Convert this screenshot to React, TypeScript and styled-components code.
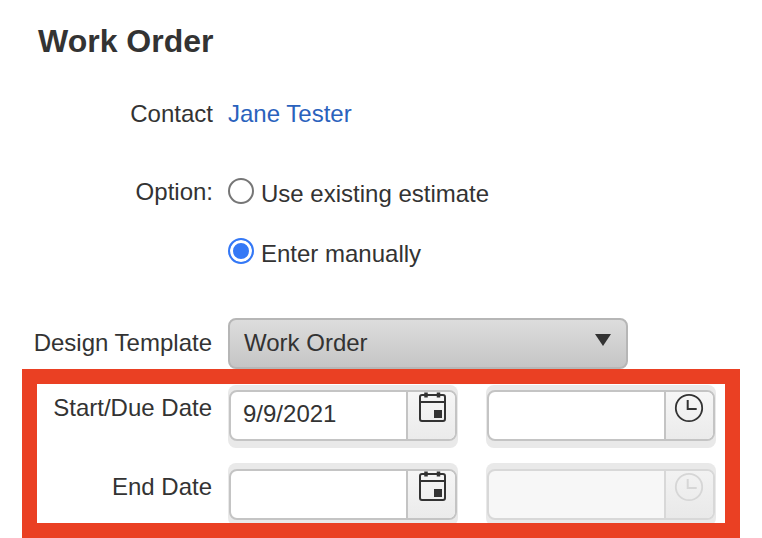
import styled, { createGlobalStyle } from 'styled-components'

const GlobalStyle = createGlobalStyle`
  html, body {
    margin: 0;
    padding: 0;
    background: #fff;
  }
  body {
    width: 762px;
    height: 538px;
    overflow: hidden;
    font-family: "Liberation Sans", Arial, sans-serif;
    color: #333;
  }
`

function CalendarIcon() {
  return (
    <svg width="30" height="32" viewBox="0 0 30 32" fill="none">
      <rect x="2" y="3" width="25" height="26" rx="2" stroke="#333" strokeWidth="2" />
      <path d="M2 10H27" stroke="#333" strokeWidth="2" />
      <path d="M8 0.5V5.5M20.5 0.5V5.5" stroke="#333" strokeWidth="3.5" />
      <rect x="16" y="18" width="8" height="8" fill="#333" />
    </svg>
  )
}

function ClockIcon({ disabled }: { disabled?: boolean }) {
  const color = disabled ? '#d6d6d6' : '#333'
  return (
    <ClockSvg width="30" height="32" viewBox="0 0 30 32" fill="none">
      <circle cx="15" cy="16" r="13.2" stroke={color} strokeWidth="1.8" />
      <path d="M13.7 8V17H22.7" stroke={color} strokeWidth="2" />
    </ClockSvg>
  )
}

function App() {
  return (
    <Page>
      <GlobalStyle />
      <Title>Work Order</Title>
      <ContactRow>
        <Label>Contact</Label>
        <ContactLink>Jane Tester</ContactLink>
      </ContactRow>
      <OptionRow>
        <Label>Option:</Label>
        <RadioList>
          <RadioItem>
            <Radio />
            Use existing estimate
          </RadioItem>
          <RadioItem>
            <Radio $checked />
            Enter manually
          </RadioItem>
        </RadioList>
      </OptionRow>
      <TemplateRow>
        <TemplateLabel>Design Template</TemplateLabel>
        <Select>
          Work Order
          <Arrow />
        </Select>
      </TemplateRow>
      <Highlight>
        <DateRow>
          <DateLabel>Start/Due Date</DateLabel>
          <Widgets>
            <Widget>
              <Field>
                <FieldText>9/9/2021</FieldText>
                <Addon><CalendarIcon /></Addon>
              </Field>
            </Widget>
            <Widget>
              <Field>
                <FieldText />
                <Addon><ClockIcon /></Addon>
              </Field>
            </Widget>
          </Widgets>
        </DateRow>
        <DateRow>
          <DateLabel>End Date</DateLabel>
          <Widgets>
            <Widget>
              <Field>
                <FieldText />
                <Addon><CalendarIcon /></Addon>
              </Field>
            </Widget>
            <Widget>
              <Field $disabled>
                <FieldText />
                <Addon $disabled><ClockIcon disabled /></Addon>
              </Field>
            </Widget>
          </Widgets>
        </DateRow>
      </Highlight>
    </Page>
  )
}

const Page = styled.div`
  width: 762px;
  height: 538px;
  padding: 0 0 0 22px;
  box-sizing: border-box;
  font-size: 24px;
`
const Title = styled.h1`
  margin: 0;
  padding: 23px 0 0 16px;
  font-size: 32px;
  line-height: 37px;
  font-weight: 700;
  color: #333;
`
const Row = styled.div`
  display: flex;
  column-gap: 15px;
`
const ContactRow = styled(Row)`
  margin-top: 40px;
  line-height: 28px;
`
const OptionRow = styled(Row)`
  margin-top: 50px;
`
const TemplateRow = styled(Row)`
  margin-top: 52px;
  align-items: center;
`
const Label = styled.div`
  width: 191px;
  text-align: right;
  line-height: 28px;
  flex: none;
`
const TemplateLabel = styled(Label)`
  width: 190px;
  margin-right: 1px;
  margin-bottom: 2px;
`
const ContactLink = styled.a`
  color: #2a62bd;
`
const RadioList = styled.div`
  display: flex;
  flex-direction: column;
  row-gap: 32px;
`
const RadioItem = styled.div`
  display: flex;
  align-items: flex-start;
  column-gap: 7px;
  height: 28px;
  line-height: 32px;
`
const Radio = styled.span<{ $checked?: boolean }>`
  display: block;
  flex: none;
  width: 26px;
  height: 26px;
  box-sizing: border-box;
  border-radius: 50%;
  border: ${p => (p.$checked ? '2px solid #3478f6' : '2px solid #767676')};
  background: ${p => (p.$checked ? '#3478f6' : '#fff')};
  box-shadow: ${p => (p.$checked ? 'inset 0 0 0 3px #fff' : 'none')};
`
const Select = styled.div`
  position: relative;
  width: 400px;
  height: 51px;
  box-sizing: border-box;
  padding-left: 14px;
  line-height: 45px;
  border: 2px solid #b6b6b6;
  border-radius: 8px;
  background: linear-gradient(#dddddd, #c5c5c5);
`
const Arrow = styled.span`
  position: absolute;
  top: 14px;
  right: 15px;
  width: 0;
  height: 0;
  border-left: 8.5px solid transparent;
  border-right: 8.5px solid transparent;
  border-top: 12px solid #333;
`
const Highlight = styled.section`
  width: 718px;
  height: 169px;
  box-sizing: border-box;
  border: 15px solid #ea4023;
  overflow: hidden;
`
const Widgets = styled.div`
  display: flex;
  column-gap: 28px;
`
const Widget = styled.div`
  width: 230px;
  height: 63px;
  box-sizing: border-box;
  padding: 5px 1px 0;
  background: #e9e9e9;
  border-radius: 8px;
`
const DateLabel = styled.div`
  width: 175px;
  flex: none;
  text-align: right;
  line-height: 28px;
  padding-top: 9px;
`
const DateRow = styled.div`
  display: flex;
  column-gap: 16px;
  margin-top: 1px;
  margin-bottom: 15px;

  & + & {
    ${Widget} {
      padding-top: 6px;
    }
    ${DateLabel} {
      padding-top: 10px;
    }
  }
`
const Field = styled.div<{ $disabled?: boolean }>`
  display: flex;
  height: 51px;
  box-sizing: border-box;
  border: 2px solid ${p => (p.$disabled ? '#d8d8d8' : '#c4c4c4')};
  border-radius: 8px;
  background: ${p => (p.$disabled ? '#f7f7f7' : '#fff')};
  overflow: hidden;
`
const FieldText = styled.div`
  flex: 1;
  padding-left: 12px;
  line-height: 43px;
  font-size: 24px;
  color: #333;
`
const Addon = styled.div<{ $disabled?: boolean }>`
  flex: none;
  width: 49px;
  box-sizing: border-box;
  padding: 0 0 0 10px;
  border-left: 2px solid ${p => (p.$disabled ? '#d8d8d8' : '#c4c4c4')};
  background: ${p => (p.$disabled ? 'linear-gradient(#f2f2f2, #e9e9e9)' : 'linear-gradient(#f6f6f6, #ebebeb)')};
  svg {
    display: block;
  }
`
const ClockSvg = styled.svg`
  margin-left: -2px;
`

export default App
